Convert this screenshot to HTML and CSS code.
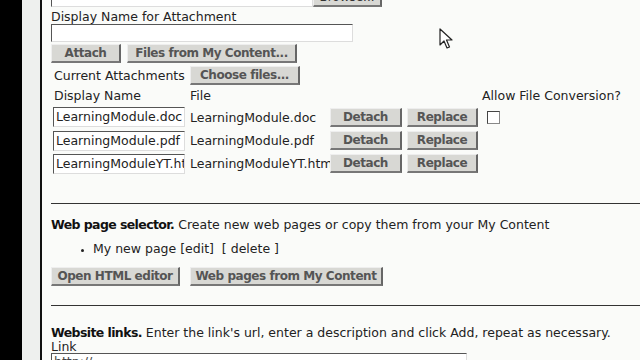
FILE: index.html
```html
<!DOCTYPE html>
<html>
<head>
<meta charset="utf-8">
<link rel="stylesheet" href="styles.css">
</head>
<body>
<div class="frame">
  <div class="edge"></div>
  <div class="gutter"></div>
  <main class="content">
    <div class="row browse-row">
      <span class="input top-input"></span>
      <span class="btn browse">Browse...</span>
    </div>
    <div class="label">Display Name for Attachment</div>
    <div class="input name-input"></div>
    <div class="row btns">
      <span class="btn attach">Attach</span>
      <span class="btn files">Files from My Content...</span>
    </div>
    <div class="row current">
      <span class="cur-label">Current Attachments</span>
      <span class="btn choose">Choose files...</span>
    </div>
    <div class="grid">
      <span class="head">Display Name</span>
      <span class="head">File</span>
      <span></span>
      <span></span>
      <span class="head allow">Allow File Conversion?</span>

      <span class="input cell">LearningModule.doc</span>
      <span class="file">LearningModule.doc</span>
      <span class="btn detach">Detach</span>
      <span class="btn replace">Replace</span>
      <span class="check"></span>

      <span class="input cell">LearningModule.pdf</span>
      <span class="file">LearningModule.pdf</span>
      <span class="btn detach">Detach</span>
      <span class="btn replace">Replace</span>
      <span></span>

      <span class="input cell">LearningModuleYT.htm</span>
      <span class="file">LearningModuleYT.htm</span>
      <span class="btn detach">Detach</span>
      <span class="btn replace">Replace</span>
      <span></span>
    </div>
    <hr class="rule first">
    <p class="desc"><b>Web page selector.</b> Create new web pages or copy them from your My Content</p>
    <ul class="pages">
      <li>My new page [edit]&nbsp; [ delete ]</li>
    </ul>
    <div class="row btns2">
      <span class="btn html">Open HTML editor</span>
      <span class="btn web">Web pages from My Content</span>
    </div>
    <hr class="rule second">
    <p class="desc links"><b>Website links.</b> Enter the link's url, enter a description and click Add, repeat as necessary.</p>
    <div class="label link">Link</div>
    <div class="input url">http://</div>
  </main>
</div>
<svg class="cursor" width="14" height="22" viewBox="0 0 14 22">
  <path d="M1 1 L1 17 L5 13 L8 20 L10.5 19 L7.5 12 L13 12 Z" fill="#fff" stroke="#222" stroke-width="1.2" stroke-linejoin="round"/>
</svg>
</body>
</html>
```
FILE: styles.css
```css
* { box-sizing: border-box; }
html, body { margin: 0; padding: 0; }
body {
  width: 640px;
  height: 360px;
  overflow: hidden;
  background: #fafbf9;
  font-family: "DejaVu Sans", Verdana, sans-serif;
  font-size: 12.5px;
  color: #222;
  position: relative;
}
.frame { display: flex; height: 360px; }
.edge { width: 22px; background: #000; flex: none; }
.gutter { width: 20px; background: #eef0ee; flex: none; border-right: 2px solid #111; }
.content { flex: 1; padding-left: 9px; margin-top: -12px; min-width: 0; }
.row { display: flex; align-items: center; }
.input {
  display: block;
  background: #fff;
  border: 1px solid #888;
  border-top-color: #555;
  border-left-color: #555;
  border-right-color: #ddd;
  border-bottom-color: #ddd;
  height: 18px;
  line-height: 16px;
  padding-left: 2px;
  color: #222;
  white-space: nowrap;
  overflow: hidden;
}
.btn {
  display: inline-block;
  background: #d8d8d4;
  color: #555;
  font-weight: bold;
  font-size: 12px;
  letter-spacing: -0.45px;
  border: 1px solid #888;
  border-top-color: #eee;
  border-left-color: #eee;
  border-right: 2px solid #666;
  border-bottom: 2px solid #777;
  height: 19px;
  line-height: 16px;
  text-align: center;
  white-space: nowrap;
  overflow: hidden;
}
.browse-row { height: 19px; }
.top-input { width: 262px; }
.browse { width: 69px; color: #333; font-weight: normal; letter-spacing: 0; }
.label { margin-top: 3px; line-height: 14px; }
.name-input { width: 302px; }
.btns { margin-top: 2px; gap: 6px; }
.attach { width: 70px; }
.files { width: 170px; }
.current { margin-top: 2px; height: 20px; }
.cur-label { width: 139px; padding-left: 3px; }
.choose { width: 110px; }
.grid {
  display: grid;
  grid-template-columns: 139px 140px 77px 75px auto;
  grid-template-rows: 18px 24px 23px 23px;
  align-items: center;
  margin-top: 2px;
}
.grid .head { padding-left: 3px; line-height: 18px; align-self: start; }
.grid > .head:nth-child(2) { padding-left: 0; }
.allow { padding-left: 0 !important; }
.cell { width: 132px; height: 20px; line-height: 18px; margin-left: 2px; }
.detach { width: 72px; }
.replace { width: 71px; }
.check {
  width: 13px; height: 13px;
  background: #fff;
  border: 1px solid #888;
  border-top-color: #444;
  border-left-color: #444;
  margin-left: 5px;
}
.rule { border: 0; border-top: 1px solid #333; margin: 0; }
.rule.first { margin-top: 28px; }
.desc { margin: 14px 0 0; line-height: 14px; white-space: nowrap; }
.desc b { color: #111; letter-spacing: -0.6px; }
.pages { margin: 10px 0 0; padding-left: 42px; line-height: 14px; }
.pages li::marker { font-size: 9px; }
.btns2 { margin-top: 11px; gap: 10px; }
.html { width: 129px; }
.web { width: 193px; }
.rule.second { margin-top: 19px; }
.links { margin-top: 20px; }
.label.link { margin-top: 0; line-height: 13px; }
.url { width: 416px; height: 18px; color: #444; }
.cursor { position: absolute; left: 439px; top: 28px; }
```
